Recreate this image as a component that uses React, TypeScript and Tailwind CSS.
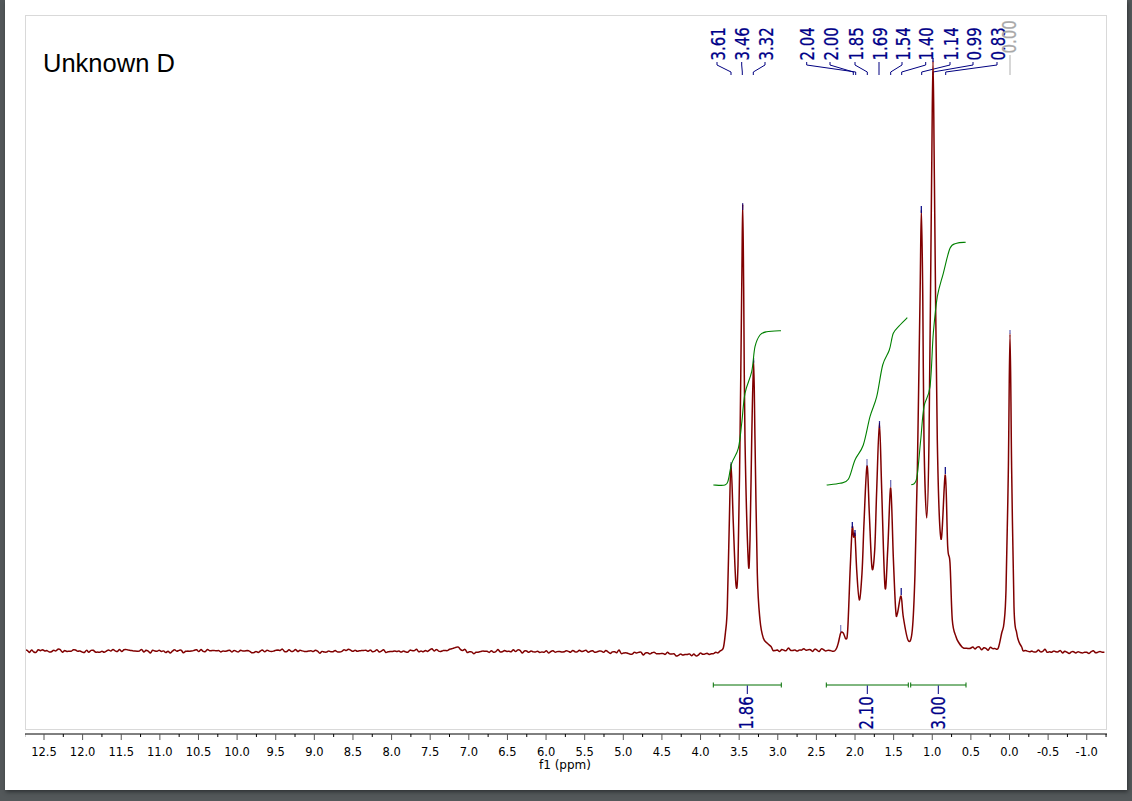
type Pt = [number, number];

// ppm scale of the plot, in page pixels
const ppmX = (ppm: number) => 1009.5 - 77.24 * ppm;

// repeatable jitter so the baseline looks like measured noise
const jitter = (x: number) => {
  const s = Math.sin(x * 12.9898) * 43758.5453;
  return (s - Math.floor(s) - 0.5) * 1.5;
};

const noise = (x: number) =>
  0.6 * Math.sin(x * 0.93) +
  0.5 * Math.sin(x * 1.71 + 1) +
  0.5 * Math.sin(x * 0.37 + 2) +
  0.5 * Math.sin(x * 0.083) +
  jitter(x);

const baseY = (x: number) => {
  if (x < 440) return 651;
  if (x < 470) return 651 - 4 * Math.exp(-((x - 456) * (x - 456)) / 30);
  if (x < 620) return 651.5;
  if (x < 723) return 652.5 + Math.min(2, (x - 620) / 30) - Math.max(0, (x - 695) / 10);
  if (x < 840) return 650 + (x > 800 ? 0.5 : 0);
  if (x < 1000) return 648.5;
  return 651.5 + (x - 1020) * 0.005;
};

const baseline = (from: number, to: number): Pt[] => {
  const pts: Pt[] = [];
  for (let x = from; x <= to; x += 2.2) pts.push([x, baseY(x) + noise(x)]);
  return pts;
};

const spectrum: Pt[] = [
  ...baseline(25, 722),
  [723.3, 648], [725.5, 632], [727.3, 607], [729.3, 523], [731, 464], [733.3, 523], [736, 585],
  [738, 565], [740, 440], [741.7, 290], [742.7, 204], [743.7, 290], [745, 440], [748.3, 561.7],
  [750, 540], [751.7, 440], [753.6, 360], [755, 440], [757.3, 573], [760, 620], [763.3, 638],
  [767, 643], [771, 646.5],
  ...baseline(773, 835),
  [836.7, 648], [838.3, 643], [840.7, 633], [843.3, 633], [846, 639], [847.7, 630], [850, 573],
  [852.2, 528], [853.6, 537], [855, 535], [856.7, 570], [859.3, 600], [862, 573], [864, 523],
  [867, 466], [869.3, 513], [872, 568], [874.7, 550], [876.7, 490], [879.4, 423], [881.7, 490],
  [885, 587], [887.7, 550], [890.7, 488], [893.3, 557], [895.7, 610], [897.3, 614], [901, 596],
  [903.3, 617], [908.3, 640.7], [912.3, 630], [915, 573], [917.3, 473], [920, 300], [921.4, 210],
  [922.8, 300], [924, 440], [926.7, 518], [929, 440], [931.6, 180], [933, 61], [934.4, 180],
  [937.3, 440], [941, 539], [945.3, 475], [947.7, 546.7], [950, 563], [952.3, 620], [956, 636.7],
  [959, 643], [962, 647],
  ...baseline(964, 997),
  [998.3, 648], [1001.7, 633], [1004, 623], [1006, 590], [1008.3, 473], [1010, 334], [1011.7, 473],
  [1014, 607], [1016.7, 633], [1019, 642], [1021.7, 647],
  ...baseline(1023, 1106),
];

// Catmull-Rom through the points, so the peaks stay round
const smooth = (pts: Pt[]) => {
  let d = `M${pts[0][0]} ${pts[0][1]}`;
  for (let i = 0; i < pts.length - 1; i++) {
    const p0 = pts[Math.max(i - 1, 0)];
    const p1 = pts[i];
    const p2 = pts[i + 1];
    const p3 = pts[Math.min(i + 2, pts.length - 1)];
    const c1x = p1[0] + (p2[0] - p0[0]) / 6;
    const c1y = p1[1] + (p2[1] - p0[1]) / 6;
    const c2x = p2[0] - (p3[0] - p1[0]) / 6;
    const c2y = p2[1] - (p3[1] - p1[1]) / 6;
    d += `C${c1x.toFixed(1)} ${c1y.toFixed(1)} ${c2x.toFixed(1)} ${c2y.toFixed(1)} ${p2[0].toFixed(1)} ${p2[1].toFixed(1)}`;
  }
  return d;
};

const zoomed = (pts: Pt[]): Pt[] => pts.map(([x, y]) => [700 + x / 3, 190 + y / 3]);

const integrals: Pt[][] = [
  zoomed([[40, 885], [75, 885], [85, 870], [95, 820], [115, 775], [125, 700], [135, 610], [155, 545], [165, 470], [180, 435], [200, 425], [243, 422]]),
  zoomed([[380, 885], [420, 880], [445, 868], [465, 810], [490, 765], [510, 680], [530, 620], [548, 525], [568, 480], [580, 430], [600, 405], [622, 383]]),
  zoomed([[634, 885], [650, 865], [662, 750], [672, 650], [690, 590], [700, 430], [712, 320], [730, 250], [750, 175], [770, 160], [797, 157]]),
];

const peaks = [
  { label: '3.61', x: 717, to: 731 },
  { label: '3.46', x: 741.7, to: 742.3 },
  { label: '3.32', x: 765, to: 753.3 },
  { label: '2.04', x: 806.7, to: 855.7 },
  { label: '2.00', x: 830, to: 853.3 },
  { label: '1.85', x: 855, to: 867.3 },
  { label: '1.69', x: 879, to: 879 },
  { label: '1.54', x: 902, to: 890.7 },
  { label: '1.40', x: 925.7, to: 901.7 },
  { label: '1.14', x: 950, to: 921.7 },
  { label: '0.99', x: 973, to: 933 },
  { label: '0.83', x: 997, to: 945.7 },
];

const tips: [number, number, number, number][] = [
  [731, 462, 469, 0.55], [742.7, 203, 210, 0.7], [753.6, 358, 363, 0.8], [840.7, 625, 632, 0.5],
  [852.3, 522, 528, 1], [855, 530, 536, 1], [867, 459, 466, 0.55], [879.5, 421, 428, 0.8],
  [890.7, 480, 487, 0.6], [901.2, 588, 595, 1], [921.3, 206, 213, 1], [933, 58, 62, 1],
  [945.3, 467, 474, 1], [1010, 330, 334, 0.6],
];

const brackets = [
  { from: 713.3, to: 781.3, tick: 747.3, textX: 753.3, label: '1.86' },
  { from: 826.3, to: 908.3, tick: 867.3, textX: 873.3, label: '2.10' },
  { from: 910.7, to: 966, tick: 938.3, textX: 945, label: '3.00' },
];

const fontStack = '"DejaVu Sans", sans-serif';

// the labels in the picture are stretched across the line, hence the scale
function PeakText({ x, y, color, children }: { x: number; y: number; color: string; children: string }) {
  return (
    <text
      transform={`translate(${x} ${y}) rotate(-90) scale(1 1.33)`}
      fontFamily={fontStack}
      fontSize={15}
      fill={color}
      stroke={color}
      strokeWidth={0.2}
    >
      {children}
    </text>
  );
}

function Spectrum() {
  return (
    <svg width={1080} height={713} viewBox="26 16 1080 713" className="block">
      {peaks.map((p) => (
        <g key={p.label}>
          <path d={`M${p.x} 62V65L${p.to} 72V75`} fill="none" stroke="#000080" strokeWidth={1} />
          <PeakText x={p.x + 7.5} y={60.5} color="#000088">
            {p.label}
          </PeakText>
        </g>
      ))}
      <path d="M1010 55V75" fill="none" stroke="#bcbcbc" strokeWidth={1.2} />
      <PeakText x={1015.5} y={53.5} color="#a8a8a8">
        0.00
      </PeakText>

      <path d={smooth(spectrum)} fill="none" stroke="#800000" strokeWidth={1.5} strokeLinejoin="round" />

      {tips.map(([x, y1, y2, o]) => (
        <line key={x} x1={x} x2={x} y1={y1} y2={y2} stroke="#000080" strokeWidth={1.2} opacity={o} />
      ))}

      {integrals.map((pts, i) => (
        <path key={i} d={smooth(pts)} fill="none" stroke="#008000" strokeWidth={1.1} />
      ))}

      {brackets.map((b) => (
        <g key={b.label}>
          <path
            d={`M${b.from} 682.5V687.5M${b.from} 685H${b.to}M${b.to} 682.5V687.5`}
            fill="none"
            stroke="#006f00"
            strokeWidth={1}
          />
          <path d={`M${b.tick} 685.5V694`} fill="none" stroke="#000080" strokeWidth={1} />
          <PeakText x={b.textX} y={729.5} color="#000088">
            {b.label}
          </PeakText>
        </g>
      ))}
    </svg>
  );
}

function Axis() {
  const ticks: { x: number; major: boolean; ppm: number }[] = [];
  for (let i = 0; i <= 56; i++) {
    const ppm = 12.75 - i * 0.25;
    ticks.push({ x: ppmX(ppm), major: i % 2 === 1, ppm });
  }
  return (
    <svg width={1082} height={45} viewBox="25 730 1082 45" className="block">
      <line x1={25} x2={1107} y1={734} y2={734} stroke="#000" strokeWidth={1} />
      {ticks.map((t) => (
        <line
          key={t.ppm}
          x1={t.x}
          x2={t.x}
          y1={734}
          y2={t.major ? 740 : 737}
          stroke={t.major ? '#555' : '#000'}
          strokeWidth={1}
        />
      ))}
      {ticks
        .filter((t) => t.major)
        .map((t) => (
          <text
            key={t.ppm}
            x={t.x}
            y={756}
            textAnchor="middle"
            fontFamily={fontStack}
            fontSize={11.5}
            fill="#000"
          >
            {t.ppm.toFixed(1)}
          </text>
        ))}
      <text x={565} y={768.5} textAnchor="middle" fontFamily={fontStack} fontSize={12} fill="#000">
        f1 (ppm)
      </text>
    </svg>
  );
}

export default function App() {
  return (
    <div className="w-[1132px] h-[801px] bg-[#53585a] pl-[5px] overflow-hidden">
      <div className="w-[1122px] h-[790px] bg-white pt-[15px] pl-[20px] shadow-[1px_2px_4px_#2e3234]">
        <div className="relative w-[1082px] h-[715px] border border-[#d9d9d9]">
          <span className="absolute left-[17px] top-[32px] font-['Liberation_Sans',sans-serif] text-[25.5px] leading-[30px] text-black">
            Unknown D
          </span>
          <Spectrum />
        </div>
        <Axis />
      </div>
    </div>
  );
}
